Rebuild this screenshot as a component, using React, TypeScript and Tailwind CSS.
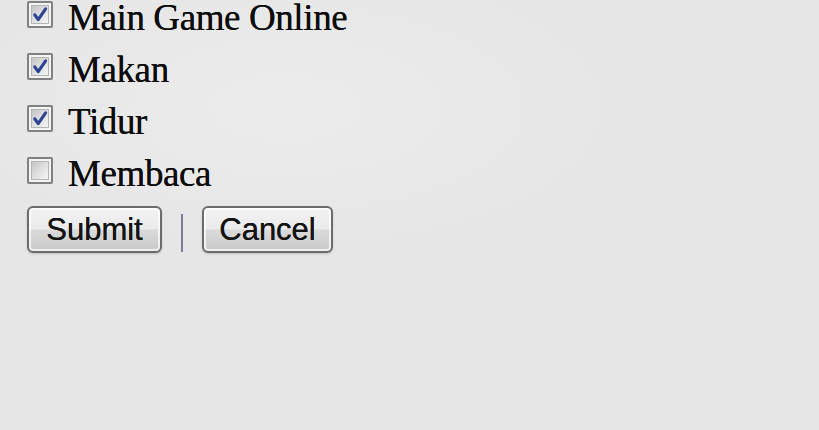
const items = [
  { label: "Main Game Online", checked: true },
  { label: "Makan", checked: true },
  { label: "Tidur", checked: true },
  { label: "Membaca", checked: false },
];

function Checkbox({ checked }: { checked: boolean }) {
  return (
    <span className="mt-[1px] flex h-[27px] w-[26px] shrink-0 rounded-[2px] border-2 border-[#808182] bg-[#f4f4f4] p-[2px]">
      <span className="flex h-full w-full items-center justify-center border border-[#b4b5b6] bg-gradient-to-br from-[#c3c4c5] via-[#dfdfe0] to-[#f6f6f6]">
        {checked && (
          <svg viewBox="0 0 16 16" className="h-[17px] w-[16px]" aria-hidden>
            <path
              d="M2.8 8.3 L6.2 13.2 L13.6 2.4"
              fill="none"
              stroke="#2c4294"
              strokeWidth="3.1"
              strokeLinecap="round"
              strokeLinejoin="round"
            />
          </svg>
        )}
      </span>
    </span>
  );
}

function Button({ children, width }: { children: string; width: string }) {
  return (
    <button
      className={`${width} h-[47px] rounded-[6px] border-2 border-[#6c6c6c] bg-[linear-gradient(to_bottom,#f2f2f2_0%,#ebebeb_48%,#dadada_52%,#c9c9c9_100%)] text-[31px] leading-none text-[#141414] shadow-[inset_0_0_0_2px_rgba(255,255,255,0.7),0_1px_2px_rgba(0,0,0,0.18)] [text-shadow:0_0_0.5px_#000] [font-family:'Liberation_Sans',Arial,sans-serif]`}
    >
      {children}
    </button>
  );
}

export default function App() {
  return (
    <div className="h-[430px] w-[819px] overflow-hidden bg-[#e6e6e6] bg-[radial-gradient(ellipse_60%_50%_at_35%_25%,#ececec_0%,#e6e6e6_70%)] pl-[27px]">
      <div className="flex flex-col gap-[16px]">
        {items.map((item) => (
          <label key={item.label} className="flex h-[36px] items-start gap-[15px]">
            <Checkbox checked={item.checked} />
            <span className="whitespace-nowrap text-[37px] leading-[36px] tracking-[-0.4px] text-[#0d0d0d] [text-shadow:0_0_0.6px_#000] [font-family:'Liberation_Serif','Times_New_Roman',serif]">
              {item.label}
            </span>
          </label>
        ))}
      </div>

      <div className="mt-[14px] flex items-center gap-[19px]">
        <Button width="w-[135px]">Submit</Button>
        <span className="mt-[7px] h-[38px] w-[2px] bg-[#7d7c98]" />
        <Button width="w-[131px]">Cancel</Button>
      </div>
    </div>
  );
}
